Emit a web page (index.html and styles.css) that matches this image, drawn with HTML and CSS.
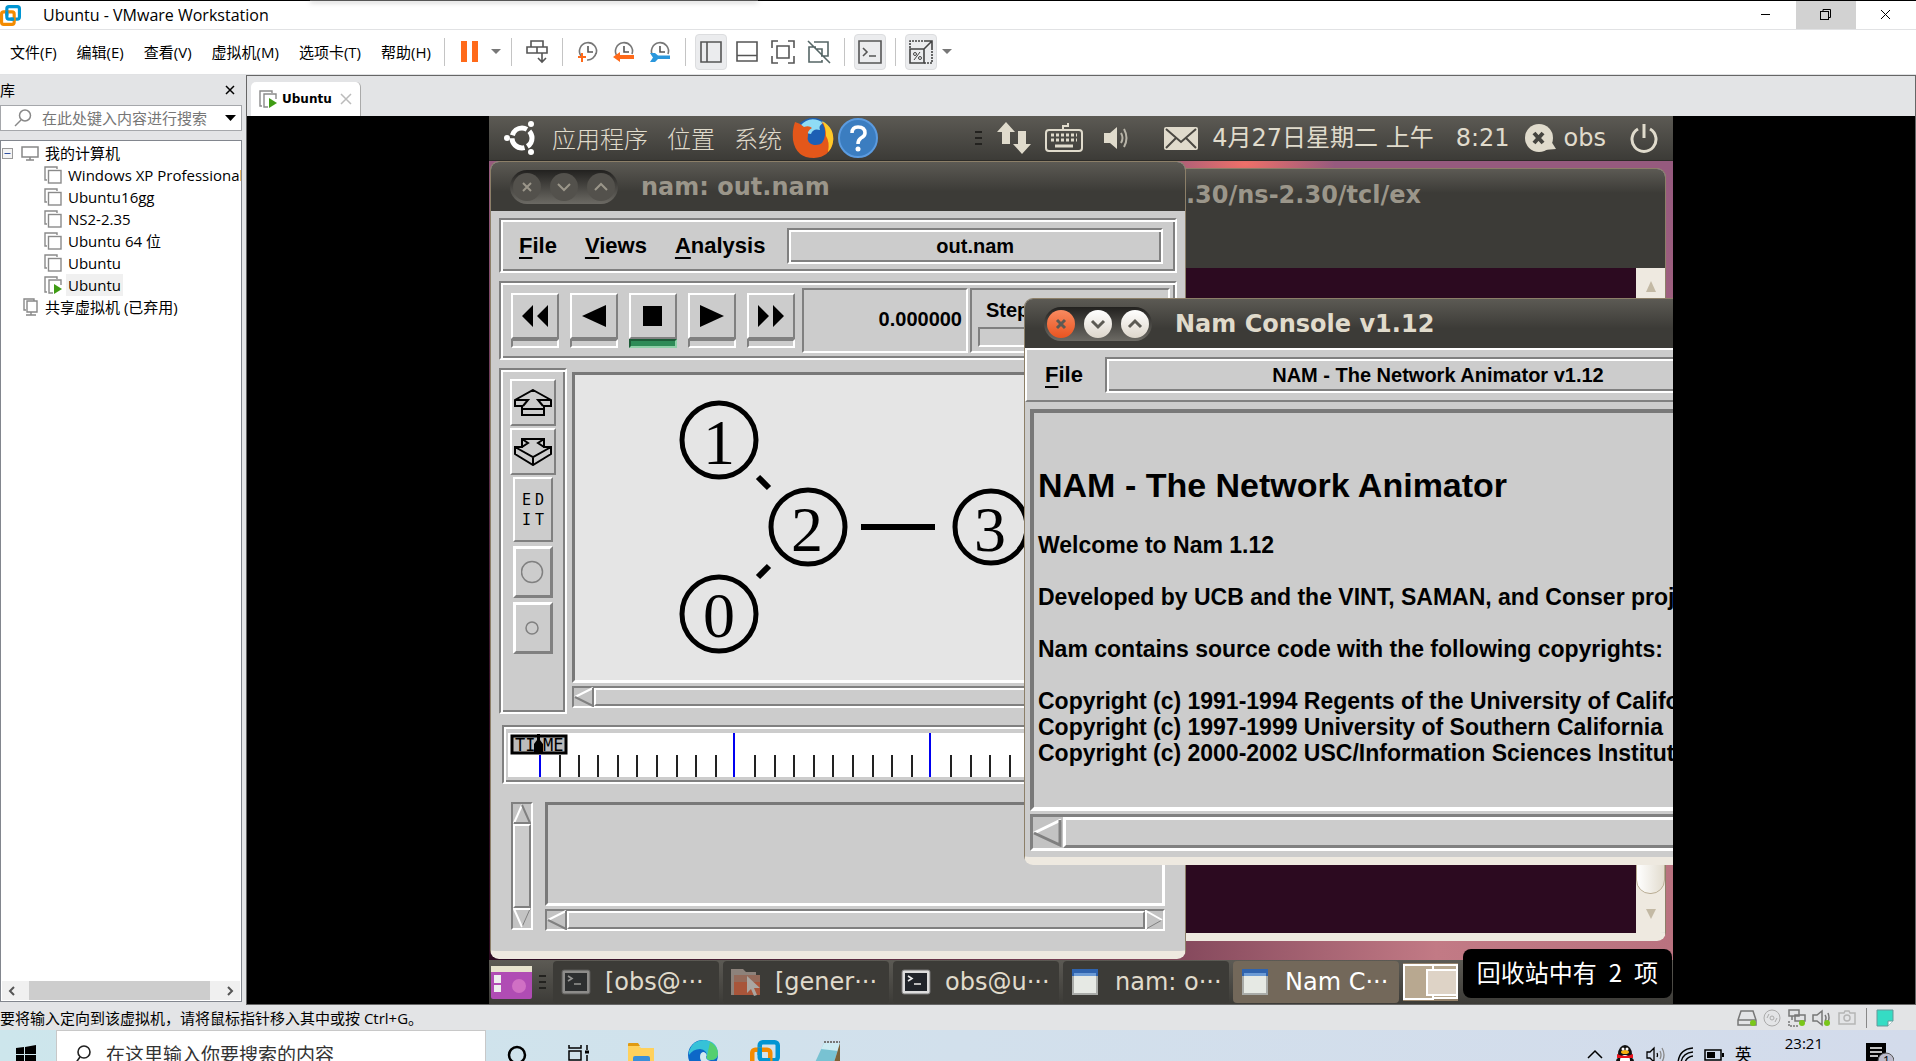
FILE: index.html
```html
<!DOCTYPE html>
<html lang="zh-CN">
  <head>
    <meta charset="UTF-8" />
    <meta name="viewport" content="width=device-width, initial-scale=1.0" />
    <title>Ubuntu - VMware Workstation</title>
    <link rel="stylesheet" href="styles.css">
  </head>
  <body>
    <!-- shared icons -->
    <svg class="defs" width="0" height="0">
      <symbol id="vmware" viewBox="0 0 20 20">
        <rect x="6.500" y="1.500" width="12" height="12" rx="2" fill="none" stroke="#0095d3" stroke-width="3" />
        <rect x="1.500" y="6.500" width="12" height="12" rx="2" fill="none" stroke="#f38b00" stroke-width="3" />
        <path d="M6.500 10V5M13.500 13.500H10" stroke="#0095d3" stroke-width="3" fill="none" />
      </symbol>
      <symbol id="vm" viewBox="0 0 18 18">
        <path d="M13 3V1H1V14H3" fill="none" stroke="#8a8a8a" stroke-width="1.400" />
        <rect x="4.500" y="4.500" width="12.500" height="12.500" fill="#fff" stroke="#8a8a8a" stroke-width="1.400" />
      </symbol>
      <symbol id="vm-on" viewBox="0 0 18 18">
        <path d="M13 3V1H1V16H3" fill="none" stroke="#8a8a8a" stroke-width="1.400" />
        <path d="M17 9V4H5V17H9" fill="none" stroke="#8a8a8a" stroke-width="1.400" />
        <path d="M10 8L18 13L10 18Z" fill="#3f9c14" />
      </symbol>
      <symbol id="clock" viewBox="0 0 22 22">
        <path d="M4 15A8.500 8.500 0 1 1 19 13" fill="none" stroke="#777" stroke-width="1.600" />
        <path d="M11 5V11H16" fill="none" stroke="#555" stroke-width="1.600" />
      </symbol>
      <symbol id="term" viewBox="0 0 30 26">
        <rect x="1" y="1" width="28" height="24" rx="2" fill="#ddd" stroke="#777" />
        <rect x="4" y="4" width="22" height="18" fill="#20242a" />
        <path d="M7 7L11 9.500L7 12M13 15H20" fill="none" stroke="#eee" stroke-width="1.600" />
      </symbol>
      <symbol id="win" viewBox="0 0 30 26">
        <rect x="2" y="1" width="24" height="24" fill="#e6e9e4" stroke="#a9aba8" stroke-width="2" />
        <rect x="1" y="0" width="26" height="7" fill="#2f63ae" />
        <rect x="3" y="4" width="22" height="3" fill="#6c9bd5" />
      </symbol>
    </svg>

    <main class="app">
      <header class="titlebar">
        <svg class="app-logo" width="21" height="21"><use href="#vmware" /></svg>
        <span class="app-title">Ubuntu - VMware Workstation</span>
        <div class="window-controls">
          <button aria-label="最小化"><svg width="12" height="12"><path d="M1 5.500H10" stroke="#000" /></svg></button>
          <button class="restore" aria-label="还原"><svg width="12" height="12" fill="none" stroke="#000"><path d="M3 2.500V.5H10.500V8.500H9" /><rect x=".5" y="2.500" width="8" height="8" /></svg></button>
          <button aria-label="关闭"><svg width="12" height="12"><path d="M1 1L10 10M10 1L1 10" stroke="#000" /></svg></button>
        </div>
      </header>

      <div class="menubar">
        <nav class="menus">
          <button>文件(F)</button>
          <button>编辑(E)</button>
          <button>查看(V)</button>
          <button>虚拟机(M)</button>
          <button>选项卡(T)</button>
          <button>帮助(H)</button>
        </nav>
        <div class="toolbar">
          <i class="sep"></i>
          <button aria-label="挂起"><svg width="18" height="22"><path d="M0 0H6V21H0ZM11 0H17V21H11Z" fill="#ff6a1a" /></svg></button>
          <button class="caret" aria-label="电源选项"><svg width="10" height="6"><path d="M0 0H10L5 5Z" fill="#777" /></svg></button>
          <i class="sep"></i>
          <button aria-label="发送"><svg width="22" height="24" fill="none" stroke="#555" stroke-width="1.600"><path d="M5 1H17V7H5ZM1 7H11V13H1ZM11 7H21V13H11ZM16 13V21M12 18L16 22L20 18" /></svg></button>
          <i class="sep"></i>
          <button aria-label="拍摄快照"><svg width="22" height="22"><use href="#clock" /><path d="M19 12A8.500 8.500 0 0 1 10 19" fill="none" stroke="#777" stroke-width="1.600" /><path d="M1 16H9M5 12V21" stroke="#ff6a1a" stroke-width="2" /></svg></button>
          <button aria-label="恢复快照"><svg width="22" height="22"><use href="#clock" /><path d="M0 16L7 11V14H21V18H7V21Z" fill="#ff6a1a" /></svg></button>
          <button aria-label="管理快照"><svg width="22" height="22"><use href="#clock" /><path d="M1 12H6L9 14.500H21V18H9L6 21H1L4 16.500Z" fill="#2a97dc" /></svg></button>
          <i class="sep"></i>
          <button class="on" aria-label="库"><svg width="22" height="22" fill="none" stroke="#555" stroke-width="1.600"><path d="M1 1H21V21H1ZM7 1V21" /></svg></button>
          <button aria-label="缩略图栏"><svg width="22" height="22" fill="none" stroke="#555" stroke-width="1.600"><path d="M1 1H21V20H1ZM1 14.500H21" /></svg></button>
          <button aria-label="全屏"><svg width="24" height="24" fill="none" stroke="#555" stroke-width="1.600"><path d="M1 8V1H7M17 1H23V8M23 16V23H17M7 23H1V16M6 6H18V18H6Z" /></svg></button>
          <button aria-label="Unity"><svg width="24" height="24" fill="none" stroke="#566" stroke-width="1.600"><path d="M7 2H21V16H14M15 20V22H2V7H9M9 9H15V15M1 1L23 23" /></svg></button>
          <i class="sep"></i>
          <button class="on" aria-label="控制台"><svg width="24" height="24" fill="none" stroke="#555" stroke-width="1.600"><path d="M1 1H23V23H1ZM5 8L9 12L5 16M11 16H18" /></svg></button>
          <i class="sep"></i>
          <button class="on" aria-label="拉伸"><svg width="24" height="24" fill="none" stroke="#444" stroke-width="1.600"><path d="M1 9H15V23H1ZM15 9L23 1M16 1H23V8" /><path d="M1 8V1H16M23 8V23H15" stroke-dasharray="2 1" /><path d="M5 20L11 12" stroke-width="1" /><circle cx="6" cy="14" r="1.500" stroke-width="1" /><circle cx="11" cy="18" r="1.500" stroke-width="1" /></svg></button>
          <button class="caret" aria-label="拉伸选项"><svg width="10" height="6"><path d="M0 0H10L5 5Z" fill="#777" /></svg></button>
        </div>
      </div>

      <div class="workspace">
        <aside class="library">
          <div class="library-head">
            <span>库</span>
            <button aria-label="关闭库"><svg width="10" height="10"><path d="M1 1L9 9M9 1L1 9" stroke="#000" stroke-width="1.500" /></svg></button>
          </div>
          <div class="library-search">
            <svg width="18" height="18" fill="none" stroke="#888" stroke-width="1.500"><circle cx="11" cy="6.500" r="5.500" /><path d="M7 11L1 17" /></svg>
            <input type="text" placeholder="在此处键入内容进行搜索" aria-label="搜索">
            <svg width="11" height="6"><path d="M0 0H11L5.500 6Z" /></svg>
          </div>
          <div class="tree">
            <ul>
              <li class="root">
                <svg width="11" height="11"><rect x=".5" y=".5" width="10" height="10" fill="#f4f4f4" stroke="#999" /><path d="M2.500 5.500H8.500" stroke="#3050a0" /></svg>
                <svg class="pc" width="18" height="15" fill="none" stroke="#888" stroke-width="1.500"><path d="M1 1H17V11H1ZM9 11V14M5 14H13" /></svg>我的计算机
              </li>
              <li><svg width="18" height="18"><use href="#vm" /></svg><span>Windows XP Professional</span></li>
              <li><svg width="18" height="18"><use href="#vm" /></svg><span>Ubuntu16gg</span></li>
              <li><svg width="18" height="18"><use href="#vm" /></svg><span>NS2-2.35</span></li>
              <li><svg width="18" height="18"><use href="#vm" /></svg><span>Ubuntu 64 位</span></li>
              <li><svg width="18" height="18"><use href="#vm" /></svg><span>Ubuntu</span></li>
              <li><svg width="18" height="18"><use href="#vm-on" /></svg><span class="current">Ubuntu</span></li>
              <li class="shared"><svg width="16" height="18" fill="none" stroke="#888" stroke-width="1.400"><path d="M11 3V1H1V12H3M4 3H14V14H4ZM8 14V17M3 17H13" /></svg>共享虚拟机 (已弃用)</li>
            </ul>
            <div class="hscroll">
              <svg width="8" height="10"><path d="M6 1L2 5L6 9" fill="none" stroke="#555" stroke-width="2" /></svg>
              <i></i>
              <svg width="8" height="10"><path d="M2 1L6 5L2 9" fill="none" stroke="#555" stroke-width="2" /></svg>
            </div>
          </div>
        </aside>

        <section class="viewer">
          <div class="tabs">
            <div class="tab">
              <svg width="18" height="18"><use href="#vm-on" /></svg>
              <span>Ubuntu</span>
              <button aria-label="关闭标签"><svg width="12" height="12"><path d="M1 1L11 11M11 1L1 11" stroke="#bbb" stroke-width="1.500" /></svg></button>
            </div>
          </div>

          <div class="display">
            <div class="guest">
              <div class="panel-top">
                <svg width="33" height="34"><circle cx="18" cy="17" r="10" fill="none" stroke="#fff" stroke-width="5" stroke-dasharray="18 3" stroke-dashoffset="8" /><g fill="#fff"><circle cx="3" cy="17" r="3" /><circle cx="27" cy="3" r="3" /><circle cx="27" cy="31" r="3" /></g></svg>
                <nav>
                  <a href="#">应用程序</a>
                  <a href="#">位置</a>
                  <a href="#">系统</a>
                </nav>
                <svg width="44" height="44">
                  <circle cx="21" cy="21" r="19" fill="#1c5fb4" />
                  <path d="M8 10Q18 -2 32 7Q26 9 28 14Q21 12 19 18Q11 17 8 10Z" fill="#8fdcf5" />
                  <path d="M3 6Q8 7 12 11Q17 9 20 12Q15 15 16 19Q14 27 22 29Q32 30 33 19Q34 11 29 6Q43 12 41 26Q38 41 22 42Q4 42 1 24Q0 14 3 6Z" fill="#e4571a" />
                  <path d="M30 5Q43 12 41 26Q40 32 36 36Q38 26 34 20Q34 11 30 5Z" fill="#ffc928" />
                </svg>
                <svg width="40" height="40"><circle cx="20" cy="20" r="19" fill="#3b7dc0" stroke="#5b9be0" stroke-width="2" /><path d="M14 15Q14 9 20 9Q27 9 27 15Q27 18 23 20Q20 22 20 26" fill="none" stroke="#fff" stroke-width="3.500" /><circle cx="20" cy="31" r="2.500" fill="#fff" /></svg>
                <div class="tray">
                  <svg width="8" height="14"><path d="M0 1H7M0 7H7M0 13H7" stroke="#23221f" stroke-width="2" /></svg>
                  <svg width="34" height="32" fill="#e0dbcc"><path d="M9 0L18 10H13V22H5V10H0ZM25 32L16 22H21V9H29V22H34Z" /></svg>
                  <svg width="38" height="30" fill="none" stroke="#e0dbcc" stroke-width="2"><rect x="1" y="7" width="36" height="21" rx="3" /><path d="M18 7V3H23V0" /><path d="M6 12H32M6 17H32" stroke-width="3" stroke-dasharray="3 2" /><path d="M10 23H28" stroke-width="3" /></svg>
                  <svg class="vol" width="24" height="24" fill="#e0dbcc"><path d="M0 7H6L13 1V23L6 17H0Z" /><path d="M17 7Q20 12 17 17M20 3Q25 12 20 21" fill="none" stroke="#b8b4a8" stroke-width="2" /></svg>
                  <svg width="34" height="23"><rect width="34" height="23" rx="2" fill="#e0dbcc" /><path d="M2 2L17 15L32 2M2 21L12 11M32 21L22 11" fill="none" stroke="#4a4842" stroke-width="2" /></svg>
                  <span class="date">4月27日星期二 上午</span>
                  <span class="clock">8:21</span>
                  <svg width="32" height="30"><circle cx="15" cy="15" r="14" fill="#e0dbcc" /><path d="M20 27L32 26L27 18Z" fill="#e0dbcc" /><path d="M10 10L19 20M19 10L10 20" stroke="#45443f" stroke-width="4" /></svg>
                  <span class="user">obs</span>
                  <svg class="power" width="28" height="30" fill="none" stroke="#e0dbcc" stroke-width="3"><path d="M8 6A12 12 0 1 0 20 6M14 1V15" /></svg>
                </div>
              </div>

              <section class="win terminal">
                <div class="terminal-head">.30/ns-2.30/tcl/ex</div>
                <div class="terminal-body">
                  <div class="terminal-screen"></div>
                  <div class="terminal-scroll">
                    <svg width="12" height="12"><path d="M6 0L11 11H1Z" fill="#c3b9a4" /></svg>
                    <i></i>
                    <svg width="12" height="12"><path d="M6 11L1 1H11Z" fill="#c3b9a4" /></svg>
                  </div>
                </div>
              </section>

              <section class="win nam">
                <div class="win-title">
                  <div class="orbs">
                    <button aria-label="关闭"><svg width="12" height="12"><path d="M2 2L10 10M10 2L2 10" /></svg></button>
                    <button aria-label="最小化"><svg width="16" height="12"><path d="M2 3L8 9L14 3" /></svg></button>
                    <button aria-label="最大化"><svg width="16" height="12"><path d="M2 9L8 3L14 9" /></svg></button>
                  </div>
                  <span>nam: out.nam</span>
                </div>
                <div class="nam-body">
                  <div class="groove nam-menu">
                    <button><u>F</u>ile</button>
                    <button><u>V</u>iews</button>
                    <button><u>A</u>nalysis</button>
                    <div class="groove name-box">out.nam</div>
                  </div>

                  <div class="groove nam-controls">
                    <div class="play"><button class="raised" aria-label="快退"><svg width="28" height="22"><path d="M12 0V22L1 11ZM27 0V22L16 11Z" /></svg></button><i></i></div>
                    <div class="play"><button class="raised" aria-label="倒放"><svg width="24" height="22"><path d="M24 0V22L0 11Z" /></svg></button><i></i></div>
                    <div class="play stop"><button class="raised" aria-label="停止"><svg width="20" height="20"><path d="M0 0H19V20H0Z" /></svg></button><i></i></div>
                    <div class="play"><button class="raised" aria-label="播放"><svg width="24" height="22"><path d="M0 0V22L24 11Z" /></svg></button><i></i></div>
                    <div class="play"><button class="raised" aria-label="快进"><svg width="28" height="22"><path d="M1 0V22L12 11ZM16 0V22L27 11Z" /></svg></button><i></i></div>
                    <output class="sunken time">0.000000</output>
                    <div class="sunken step"><label for="step">Step: 2.0ms</label><input id="step" class="sunken" type="text"></div>
                  </div>

                  <div class="nam-stage">
                    <div class="groove tools">
                      <button class="raised zoom" aria-label="放大"><svg width="40" height="28" fill="none" stroke="#000" stroke-width="2"><path d="M20 1L38 11V17H31V26H9V17H2V11ZM2 11H15L10 17M38 11H25L30 17M9 20H31" /></svg></button>
                      <button class="raised zoom" aria-label="缩小"><svg width="40" height="28" fill="none" stroke="#000" stroke-width="2"><path d="M9 1H31V9H38V16L20 27L2 16V9H9ZM2 9L20 19L38 9M20 19V27M9 1L15 5L9 9M31 1L25 5L31 9" /></svg></button>
                      <button class="raised edit"><span>E</span><span>D</span><span>I</span><span>T</span></button>
                      <button class="raised big" aria-label="大节点"><svg width="24" height="24"><circle cx="11" cy="12" r="10.500" fill="none" stroke="#808080" stroke-width="1.500" /></svg></button>
                      <button class="raised big" aria-label="小节点"><svg width="24" height="24"><circle cx="11" cy="12" r="6" fill="none" stroke="#808080" stroke-width="1.500" /></svg></button>
                    </div>
                    <div class="network">
                      <div class="canvas">
                        <svg width="480" height="300" viewBox="575 375 480 300" aria-label="网络拓扑">
                          <g fill="none" stroke="#000" stroke-width="5">
                            <circle cx="719" cy="440" r="37" />
                            <circle cx="719" cy="614" r="37" />
                            <circle cx="808" cy="527" r="37" />
                            <circle cx="991" cy="527" r="36" />
                            <path d="M758 477L769 488M758 577L769 566M861 527H935" stroke-width="6" />
                          </g>
                          <g class="node-label">
                            <text x="719" y="464">1</text>
                            <text x="719" y="637">0</text>
                            <text x="807" y="551">2</text>
                            <text x="990" y="551">3</text>
                          </g>
                        </svg>
                      </div>
                      <div class="tkbar">
                        <svg width="20" height="20"><path d="M19 1L1 10" stroke="#fff" stroke-width="2" /><path d="M1 10L19 19V1" fill="none" stroke="#808080" stroke-width="2" /></svg>
                        <i class="raised"></i>
                      </div>
                    </div>
                  </div>

                  <div class="groove timeline">
                    <svg viewBox="508 732 520 44" preserveAspectRatio="xMinYMid meet">
                      <path d="M560 754V776M579 754V776M598 754V776M618 754V776M637 754V776M657 754V776M677 754V776M696 754V776M716 754V776M755 754V776M775 754V776M794 754V776M814 754V776M833 754V776M853 754V776M873 754V776M892 754V776M912 754V776M951 754V776M971 754V776M990 754V776M1010 754V776" stroke="#222" stroke-width="2" />
                      <path d="M540 754V776M734 732V776M930 732V776" stroke="#0000f0" stroke-width="2" />
                      <rect x="512" y="735" width="54" height="17" fill="#bbb" stroke="#000" stroke-width="3" />
                      <text x="515" y="750">TI</text>
                      <text x="543" y="750">ME</text>
                      <path d="M537 733H540V739L543 743V753H534V743L537 739Z" />
                    </svg>
                  </div>

                  <div class="annotations">
                    <div class="tkbar vertical">
                      <svg width="18" height="20"><path d="M1 19L9 1" stroke="#fff" stroke-width="2" /><path d="M9 1L17 19H1" fill="none" stroke="#808080" stroke-width="2" /></svg>
                      <i class="raised"></i>
                      <svg width="18" height="20"><path d="M17 1L9 19" stroke="#808080" stroke-width="1" /><path d="M9 19L1 1H17" fill="none" stroke="#fff" stroke-width="2" /></svg>
                    </div>
                    <div class="notes">
                      <div class="note-area"></div>
                      <div class="tkbar">
                        <svg width="20" height="20"><path d="M19 1L1 10" stroke="#fff" stroke-width="2" /><path d="M1 10L19 19V1" fill="none" stroke="#808080" stroke-width="2" /></svg>
                        <i class="raised"></i>
                        <svg width="18" height="20"><path d="M1 19L17 10" stroke="#808080" /><path d="M17 10L1 1V19" fill="none" stroke="#fff" stroke-width="2" /></svg>
                      </div>
                    </div>
                  </div>
                </div>
              </section>

              <section class="win console">
                <div class="win-title active">
                  <div class="orbs">
                    <button class="close" aria-label="关闭"><svg width="12" height="12"><path d="M2 2L10 10M10 2L2 10" /></svg></button>
                    <button aria-label="最小化"><svg width="16" height="12"><path d="M2 3L8 9L14 3" /></svg></button>
                    <button aria-label="最大化"><svg width="16" height="12"><path d="M2 9L8 3L14 9" /></svg></button>
                  </div>
                  <span>Nam Console v1.12</span>
                </div>
                <div class="raised console-menu">
                  <button><u>F</u>ile</button>
                  <div class="groove name-box">NAM - The Network Animator v1.12</div>
                </div>
                <div class="console-text">
                  <h1>NAM - The Network Animator</h1>
                  <p>Welcome to Nam 1.12</p>
                  <p>Developed by UCB and the VINT, SAMAN, and Conser projects.</p>
                  <p>Nam contains source code with the following copyrights:</p>
                  <p>Copyright (c) 1991-1994 Regents of the University of California.<br>
                    Copyright (c) 1997-1999 University of Southern California<br>
                    Copyright (c) 2000-2002 USC/Information Sciences Institute</p>
                </div>
                <div class="tkbar thick">
                  <svg width="30" height="28"><path d="M28 1L1 14" stroke="#fff" stroke-width="3" /><path d="M1 14L27 26V1" fill="none" stroke="#808080" stroke-width="3" /></svg>
                  <i class="raised"></i>
                </div>
              </section>

              <div class="panel-bottom">
                <svg class="desk" width="41" height="33"><rect width="41" height="33" rx="2" fill="#b04cb4" /><rect width="41" height="6" fill="#e7e3cd" /><path d="M3 9H10V17H3ZM3 19H10V26H3Z" fill="#eee" /><circle cx="28" cy="20" r="7" fill="#d070c4" /></svg>
                <svg class="grip" width="8" height="14"><path d="M0 1H7M0 7H7M0 13H7" stroke="#23221f" stroke-width="2" /></svg>
                <button class="task"><svg class="dim" width="30" height="26"><use href="#term" /></svg>[obs@···</button>
                <button class="task"><svg width="30" height="28"><path d="M0 1H12L15 4H25V27H0Z" fill="#8d827b" /><path d="M3 7H29V27H3Z" fill="#a8553a" /><path d="M3 7H29V14H3Z" fill="#946a5a" /><path d="M16 8V25L20 21L23 28L26 27L23 20H29Z" fill="#aaa6a2" /></svg>[gener···</button>
                <button class="task"><svg width="30" height="26"><use href="#term" /></svg>obs@u···</button>
                <button class="task"><svg width="30" height="26"><use href="#win" /></svg>nam: o···</button>
                <button class="task current"><svg width="30" height="26"><use href="#win" /></svg>Nam C···</button>
                <svg class="pager" width="55" height="38"><rect width="55" height="38" fill="#94826b" /><path d="M1 2H30V36H1ZM30 2H54V35H30Z" fill="#b8a890" stroke="#fff" stroke-width="2" /><rect x="24" y="7" width="30" height="25" fill="#ded3c6" stroke="#fff" stroke-width="2" /></svg>
              </div>
              <div class="tooltip">回收站中有<span>2</span>项</div>
            </div>
          </div>
        </section>
      </div>

      <footer class="status">
        <span>要将输入定向到该虚拟机，请将鼠标指针移入其中或按 Ctrl+G。</span>
        <div class="devices">
          <svg width="20" height="18" fill="none" stroke="#777" stroke-width="1.500"><path d="M4 2H16L19 11V16H1V11ZM1 11H19" /><circle cx="16" cy="14" r="3" fill="#7ac61a" stroke="none" /></svg>
          <svg width="20" height="18" fill="none" stroke="#aaa"><circle cx="10" cy="9" r="8" /><circle cx="10" cy="9" r="2" /><path d="M5 9L7 5M13 13L15 9" /></svg>
          <svg width="20" height="18" fill="none" stroke="#777" stroke-width="1.500"><path d="M2 1H12V7H2ZM8 6H18V12H8ZM5 7V11" /><path d="M2 12V17H12" stroke-dasharray="2 1" /><circle cx="15" cy="14" r="3" fill="#7ac61a" stroke="none" /></svg>
          <svg width="20" height="18" fill="none" stroke="#777" stroke-width="1.500"><path d="M1 6H5L10 2V16L5 12H1ZM13 6Q15 9 13 12M16 4Q18 9 16 13" /><circle cx="15" cy="14" r="3" fill="#7ac61a" stroke="none" /></svg>
          <svg width="20" height="18" fill="none" stroke="#b5b5b5" stroke-width="1.500"><path d="M2 4H7L8 2H12L13 4H18V15H2Z" /><circle cx="10" cy="9" r="3" /></svg>
          <i></i>
          <svg width="18" height="18"><path d="M1 1H17V12L12 17H1Z" fill="#35dcc4" stroke="#699" /><path d="M12 17V12H17" fill="#fff" stroke="#699" /></svg>
        </div>
      </footer>
    </main>

    <div class="taskbar">
      <div class="taskbar-inner">
        <button class="start" aria-label="开始"><svg width="20" height="20"><path d="M0 3L8 2V9H0ZM9 2L20 0V9H9ZM0 10H8V18L0 17ZM9 10H20V20L9 18Z" /></svg></button>
        <div class="taskbar-search">
          <svg width="18" height="20" fill="none" stroke="#222" stroke-width="1.600"><circle cx="10" cy="7" r="6" /><path d="M6 12L1 19" /></svg>
          <input type="text" placeholder="在这里输入你要搜索的内容" aria-label="Windows 搜索">
        </div>
        <div class="pinned">
          <button aria-label="Cortana"><svg width="20" height="20"><circle cx="10" cy="10" r="8" fill="none" stroke="#000" stroke-width="2.500" /></svg></button>
          <button aria-label="任务视图"><svg width="22" height="20" fill="none" stroke="#000" stroke-width="1.500"><path d="M1 0V3H13V0M1 6H13V15H1ZM1 20V18H13V20M19 0V5M19 10V20" /><path d="M17 7H21" stroke-width="3" /></svg></button>
          <button aria-label="文件资源管理器"><svg width="26" height="24"><path d="M0 3H11L13 5H26V23H0Z" fill="#ffd15c" /><path d="M0 1Q0 0 1 0H10L12 3H0Z" fill="#e09a12" /><path d="M5 24V15Q5 13 7 13H20Q22 13 22 15V24Z" fill="#3a8fd8" /></svg></button>
          <button aria-label="Edge"><svg width="30" height="30"><circle cx="15" cy="15" r="15" fill="#0d68c8" /><path d="M1 11Q5 0 16 0Q29 1 30 13Q30 20 23 20Q17 20 19 16Q19 10 12 9Q5 9 1 15Z" fill="#36c2d8" /><path d="M22 2Q30 6 30 14Q29 20 23 20Q17 20 19 16Z" fill="#55cf70" /><path d="M12 17Q12 12 16 12Q20 14 18 17Q18 20 23 21Q18 25 14 22Q12 20 12 17Z" fill="#d2e8f0" /></svg></button>
          <button aria-label="VMware"><svg width="30" height="30"><use href="#vmware" /></svg></button>
          <button aria-label="记事本"><svg width="30" height="28"><path d="M12 2H28L20 28H0Z" fill="#78c2d2" /><path d="M12 2H28L26 10L9 8Z" fill="#cdebf2" /><path d="M28 2V20L24 28H20Z" fill="#7b6238" /><path d="M12 1H28" stroke="#777" stroke-width="2" stroke-dasharray="2 1" /></svg></button>
        </div>
        <div class="systray">
          <svg width="18" height="18"><path d="M2 12L9 5L16 12" fill="none" stroke="#000" stroke-width="1.500" /></svg>
          <svg width="20" height="22"><ellipse cx="10" cy="10" rx="7" ry="9" fill="#111" /><ellipse cx="10" cy="17" rx="9" ry="5" fill="#111" /><ellipse cx="10" cy="16" rx="5" ry="5" fill="#fff" /><ellipse cx="10" cy="8" rx="4" ry="2" fill="#f5b010" /><circle cx="8" cy="5" r="1.500" fill="#fff" /><circle cx="12" cy="5" r="1.500" fill="#fff" /><path d="M2 10Q10 14 18 10V14H2Z" fill="#e8121c" /></svg>
          <svg width="20" height="18" fill="none" stroke="#000" stroke-width="1.300"><path d="M1 6H4L8 2V16L4 12H1ZM11 7Q12 9 11 11" /><path d="M14 5Q16 9 14 13M16 2Q20 9 16 16" stroke="#888" /></svg>
          <svg width="16" height="18" fill="none" stroke="#000" stroke-width="1.400"><path d="M1 17Q2 3 16 2M4 17Q5 7 16 6M8 17Q9 11 16 10" /></svg>
          <svg width="20" height="14"><path d="M1 2H17V12H1Z" fill="none" stroke="#000" stroke-width="1.500" /><path d="M3 4H11V10H3ZM18 5H20V9H18Z" /></svg>
          <span class="ime">英</span>
          <time>23:21</time>
          <svg class="notice" width="28" height="28"><path d="M0 2H20V20H8L4 24V20H0Z" /><path d="M4 7H16M4 11H16M4 15H12" stroke="#fff" stroke-width="1.500" /><circle cx="20" cy="20" r="8" fill="#bbc" stroke="#555" /><text x="17" y="24">1</text></svg>
        </div>
      </div>
    </div>
  </body>
</html>
```
FILE: styles.css
```css
* {
  box-sizing: border-box;
}

body {
  margin: 0;
  height: 100vh;
  display: flex;
  flex-direction: column;
  overflow: hidden;
  font-family: "Open Sans", "Noto Sans CJK SC", sans-serif;
  font-size: 15px;
  line-height: 22px;
  color: #000;
  background: #e3e4e6;
}

button {
  padding: 0;
  border: none;
  background: none;
  font: inherit;
  color: inherit;
}

input {
  min-width: 0;
  padding: 0;
  border: none;
  background: none;
  font: inherit;
}

svg {
  display: block;
  flex: none;
}

.defs {
  position: absolute;
}

.app {
  flex: 1;
  min-height: 0;
  display: flex;
  flex-direction: column;
}

/* title bar and menus */
.titlebar {
  position: relative;
  height: 30px;
  display: flex;
  align-items: center;
  border-top: 1px solid #000;
  border-bottom: 1px solid #e1e2e4;
  background: #fff;
}

/* edge of the hidden full screen bar */
.titlebar::before {
  content: "";
  position: absolute;
  left: 310px;
  top: -1px;
  width: 448px;
  height: 1px;
  background: #555;
  box-shadow: 0 1px 5px #777;
}

.app-title {
  margin-left: 22px;
  font-size: 16px;
}

.window-controls {
  display: flex;
  align-self: stretch;
  margin-left: auto;
}

.window-controls button {
  width: 60px;
  display: flex;
  align-items: center;
  justify-content: center;
}

.window-controls .restore {
  background: #d2d2d2;
}

.menubar {
  height: 45px;
  display: flex;
  align-items: center;
  padding-bottom: 1px;
  background: #fff;
  border-bottom: 1px solid #e1e2e4;
}

.menus {
  display: flex;
  gap: 20px;
  padding-left: 10px;
  white-space: nowrap;
}

.toolbar {
  display: flex;
  align-items: center;
  margin-left: 6px;
}

.toolbar .sep {
  width: 1px;
  height: 28px;
  margin: 0 7px;
  background: #c4c4c4;
}

.toolbar button {
  width: 32px;
  height: 36px;
  margin: 0 2px;
  display: flex;
  align-items: center;
  justify-content: center;
  border-radius: 4px;
}

.toolbar .on {
  background: #ebecee;
  border: 1px solid #dcdddf;
}

.toolbar .caret {
  width: 12px;
}

.workspace {
  flex: 1;
  min-height: 0;
  display: flex;
}

/* library */
.library {
  width: 242px;
  margin-right: 4px;
  display: flex;
  flex-direction: column;
}

.library-head {
  height: 30px;
  display: flex;
  align-items: center;
  justify-content: space-between;
  padding-right: 7px;
}

.library-search {
  height: 26px;
  display: flex;
  align-items: center;
  padding: 0 5px 0 13px;
  border: 1px solid #a5a7ab;
  background: #fff;
}

.library-search input {
  flex: 1;
  margin-left: 10px;
}

input::placeholder {
  color: #767676;
  opacity: 1;
}

.tree {
  flex: 1;
  min-height: 0;
  margin: 9px 0 3px;
  padding: 1px;
  display: flex;
  flex-direction: column;
  border: 1px solid #82868e;
  background: #fff;
  overflow: hidden;
}

.tree ul {
  flex: 1;
  margin: 0;
  padding: 0;
  list-style: none;
}

.tree li {
  height: 22px;
  display: flex;
  align-items: center;
  padding-left: 42px;
  white-space: nowrap;
}

.tree li span {
  margin-left: 4px;
  padding: 0 2px;
}

.tree .root {
  padding-left: 0;
}

.tree .pc {
  margin: 0 6px 0 8px;
}

.tree .shared {
  gap: 6px;
  padding-left: 21px;
}

.tree .current {
  background: #f0f0f0;
}

.hscroll {
  height: 19px;
  display: flex;
  align-items: center;
  padding: 0 6px;
  background: #f0f0f0;
}

.hscroll i {
  flex: 1;
  height: 19px;
  margin: 0 16px 0 13px;
  background: #cdcdcd;
}

/* tab strip and display */
.viewer {
  flex: 1;
  min-width: 0;
  display: flex;
  flex-direction: column;
  border: 1px solid #666;
}

.tabs {
  height: 40px;
  padding: 6px 0 0 4px;
}

.tab {
  width: 110px;
  height: 34px;
  display: flex;
  align-items: center;
  padding: 0 8px;
  border-radius: 5px 5px 0 0;
  border-right: 1px solid #aaa;
  background: #fff;
  font-family: "DejaVu Sans", sans-serif;
  font-weight: bold;
  font-size: 12px;
}

.tab span {
  margin: 0 auto 0 5px;
}

.display {
  flex: 1;
  min-height: 0;
  display: flex;
  justify-content: center;
  background: #000;
}

.guest {
  position: relative;
  width: 1184px;
  display: flex;
  flex-direction: column;
  justify-content: space-between;
  overflow: hidden;
  background:
    radial-gradient(ellipse 90px 30px at 756px 48px, #f07068, transparent),
    linear-gradient(#965a7e 0, #965a7e 60px, transparent 600px),
    linear-gradient(90deg, #2c0a20 0%, #84485c 58%, #c27a85 80%, #b9727f 100%);
  color: #e0dbcc;
  font-family: "DejaVu Sans", "Noto Sans CJK SC", sans-serif;
  font-size: 24px;
}

.panel-top {
  height: 45px;
  display: flex;
  align-items: center;
  padding: 0 15px;
  background: linear-gradient(#5c5a54, #3c3b37);
  border-bottom: 1px solid #2c2b28;
  white-space: nowrap;
}

.panel-top nav {
  display: flex;
  gap: 19px;
  margin: 0 10px 0 15px;
  font-family: "Noto Sans CJK SC", sans-serif;
  font-weight: 300;
}

.panel-top nav + svg {
  margin-right: 2px;
}

.panel-top a {
  color: inherit;
  text-decoration: none;
}

.tray {
  margin-left: auto;
  display: flex;
  align-items: center;
  gap: 14px;
}

.tray .vol {
  margin: 0 22px 0 7px;
}

.tray .clock {
  margin-left: 8px;
}

.tray .user {
  margin-left: -6px;
}

.tray .power {
  margin-left: 10px;
}

/* guest windows are free on the desktop */
.win {
  position: absolute;
  display: flex;
  flex-direction: column;
  border: 1px solid #8c7f68;
  border-bottom: 8px solid #eee9e0;
  border-radius: 9px;
  overflow: hidden;
  background: #ccc;
  color: #000;
  font-family: "Liberation Sans", sans-serif;
  font-weight: bold;
  font-size: 20px;
}

.win-title {
  height: 49px;
  flex: none;
  display: flex;
  align-items: center;
  gap: 23px;
  padding-left: 19px;
  background: linear-gradient(#5c5a54, #3c3b37 60%);
  color: #9b968a;
  font-family: "DejaVu Sans", sans-serif;
  font-size: 24px;
}

.win-title.active {
  color: #e0dbcc;
}

.orbs {
  height: 34px;
  display: flex;
  align-items: center;
  gap: 9px;
  padding: 0 3px;
  border-radius: 17px;
  background: linear-gradient(#22211f, #6c6a64);
}

.orbs button {
  width: 28px;
  height: 28px;
  display: flex;
  align-items: center;
  justify-content: center;
  border-radius: 50%;
  background: #53514c;
}

.orbs path {
  fill: none;
  stroke: #9b968a;
  stroke-width: 2;
}

.active .orbs button {
  background: linear-gradient(#fff, #ddd6cb);
}

.active .orbs .close {
  background: linear-gradient(#f88a60, #e95420);
}

.active .orbs path {
  stroke: #5c5a54;
  stroke-width: 3;
}

.groove {
  border: 2px solid;
  border-color: #808080 #fff #fff #808080;
  box-shadow: inset 2px 2px #fff, inset -2px -2px #808080;
}

.raised {
  border: 2px solid;
  border-color: #fff #808080 #808080 #fff;
}

.sunken {
  border: 2px solid;
  border-color: #808080 #fff #fff #808080;
}

.name-box {
  flex: 1;
  height: 36px;
  display: flex;
  align-items: center;
  justify-content: center;
}

/* terminal behind */
.terminal {
  left: 676px;
  top: 52px;
  width: 501px;
  height: 773px;
}

.terminal-head {
  height: 99px;
  padding: 15px 20px;
  background: linear-gradient(#5c5a54, #3c3b37 24px);
  color: #9b968a;
  font-family: "DejaVu Sans", sans-serif;
  font-size: 24px;
}

.terminal-body {
  flex: 1;
  display: flex;
}

.terminal-screen {
  flex: 1;
  background: #2c0a20;
}

.terminal-scroll {
  width: 29px;
  display: flex;
  flex-direction: column;
  align-items: center;
  justify-content: space-between;
  padding: 13px 0;
  background: #eee9e0;
}

.terminal-scroll i {
  flex: 1;
  width: 29px;
  margin: 14px 0;
  border: 1px solid #b9ad94;
  border-radius: 14px;
  background: linear-gradient(90deg, #fff, #e2dccf);
}

/* nam */
.nam {
  left: 1px;
  top: 45px;
  width: 696px;
  height: 798px;
}

.nam-body {
  display: flex;
  flex-direction: column;
  gap: 8px;
  padding: 7px 8px 0;
}

.nam-menu {
  height: 55px;
  display: flex;
  align-items: center;
  gap: 28px;
  padding: 0 12px 0 18px;
}

.nam-menu button,
.console-menu button {
  font-size: 22px;
}

.nam-menu .name-box {
  margin-left: -6px;
}

u {
  text-underline-offset: 4px;
  text-decoration-thickness: 2px;
}

.nam-controls {
  height: 79px;
  display: flex;
  align-items: center;
  gap: 11px;
  padding: 0 5px 0 10px;
}

.play {
  width: 48px;
}

.play button {
  width: 48px;
  height: 46px;
  display: flex;
  align-items: center;
  justify-content: center;
}

.play i {
  display: block;
  height: 9px;
  border: 2px solid;
  border-color: #808080 #fff #fff #808080;
}

.play.stop i {
  border-color: #1d5c38 #8fd0a8 #8fd0a8 #1d5c38;
  background: #2e8b57;
}

.time {
  width: 166px;
  height: 65px;
  display: flex;
  align-items: center;
  justify-content: flex-end;
  margin-left: -4px;
  padding: 0 4px 3px 0;
}

.step {
  flex: 1;
  height: 65px;
  margin-left: -9px;
  padding: 9px 6px 0;
  white-space: nowrap;
}

.step label {
  display: block;
  padding-left: 8px;
}

.step input {
  width: 100%;
  height: 20px;
  margin-top: 6px;
  display: block;
}

.nam-stage {
  height: 346px;
  display: flex;
  gap: 5px;
}

.tools {
  width: 68px;
  display: flex;
  flex-direction: column;
  align-items: center;
  padding-top: 9px;
  gap: 2px;
}

.tools button {
  width: 40px;
  display: flex;
  align-items: center;
  justify-content: center;
}

.tools .zoom {
  width: 46px;
  height: 47px;
}

.tools .edit {
  height: 65px;
  display: grid;
  grid-template-columns: 13px 13px;
  grid-auto-rows: 20px;
  place-content: center;
  font-family: "DejaVu Sans Mono", monospace;
  font-weight: normal;
  font-size: 15px;
  line-height: 20px;
}

.tools .big {
  height: 52px;
  margin-top: 2px;
  border-width: 3px;
}

.network {
  flex: 1;
  min-width: 0;
  margin-top: 4px;
}

.canvas {
  height: 311px;
  overflow: hidden;
  border: 3px solid;
  border-color: #787878 #fff #fff #787878;
  background: #e5e5e5;
}

.node-label {
  font-family: "Liberation Serif", serif;
  font-weight: normal;
  font-size: 64px;
  text-anchor: middle;
}

.tkbar {
  height: 22px;
  display: flex;
  align-items: center;
  margin-top: 3px;
  border: 2px solid;
  border-color: #808080 #fff #fff #808080;
  background: #c3c3c3;
}

.tkbar i {
  flex: 1;
  align-self: stretch;
  background: #ccc;
}

.timeline {
  height: 59px;
  margin: 3px 0 0 3px;
  padding: 6px 4px;
}

.timeline svg {
  width: 100%;
  height: 44px;
  background: #fff;
}

.timeline text {
  font-family: "DejaVu Sans Mono", monospace;
  font-weight: normal;
  font-size: 17px;
}

.annotations {
  height: 130px;
  display: flex;
  gap: 12px;
  margin: 10px 12px 0;
}

.tkbar.vertical {
  width: 22px;
  height: 128px;
  flex-direction: column;
  margin: 0;
}

.tkbar.vertical i {
  width: 18px;
}

.notes {
  flex: 1;
}

.note-area {
  height: 104px;
  border: 3px solid;
  border-color: #787878 #fff #fff #787878;
}

/* console */
.console {
  left: 535px;
  top: 182px;
  width: 760px;
  height: 567px;
}

.console-menu {
  height: 54px;
  flex: none;
  display: flex;
  align-items: center;
  gap: 22px;
  padding: 0 10px 0 18px;
}

.console-text {
  flex: 1;
  margin: 7px 6px 0 5px;
  padding: 0 4px;
  border: 4px solid;
  border-color: #787878 #fff #fff #787878;
  font-size: 23px;
  line-height: 26px;
  white-space: nowrap;
}

.console-text h1 {
  margin: 51px 0 26px;
  font-size: 34px;
  line-height: 42px;
}

.console-text p {
  margin: 0 0 26px;
}

.tkbar.thick {
  height: 37px;
  flex: none;
  margin: 3px 6px 6px 5px;
  border-width: 3px;
}

.thick i {
  border-width: 3px;
}

/* guest task list */
.panel-bottom {
  height: 44px;
  display: flex;
  align-items: center;
  gap: 4px;
  padding-left: 2px;
  background: linear-gradient(#5c5a54, #3c3b37);
}

.panel-bottom .grip {
  margin: 0 2px 0 3px;
}

.task {
  width: 166px;
  height: 42px;
  display: flex;
  align-items: center;
  gap: 14px;
  padding-left: 8px;
  border-radius: 4px;
  background: #3c3b37;
  white-space: nowrap;
}

.task .dim {
  opacity: 0.5;
}

.task.current {
  background: #73685a;
  color: #fff;
}

.tooltip {
  position: absolute;
  right: 1px;
  bottom: 6px;
  height: 49px;
  padding: 12px 14px;
  border-radius: 8px;
  background: #000;
  color: #fff;
  font-family: "Noto Sans CJK SC", sans-serif;
  white-space: nowrap;
}

.tooltip span {
  margin: 0 12px;
}

/* status bar */
.status {
  height: 25px;
  display: flex;
  align-items: center;
  justify-content: space-between;
  padding-right: 22px;
}

.devices {
  display: flex;
  align-items: center;
  gap: 5px;
}

.devices i {
  width: 1px;
  height: 20px;
  margin: 0 4px;
  background: #888;
}

/* host taskbar, its lower part runs off the screen */
.taskbar {
  height: 31px;
  flex: none;
  overflow: hidden;
  background: linear-gradient(90deg, #cde6ec, #d2e0ec 50%, #d3dbeb);
}

.taskbar-inner {
  height: 50px;
  display: flex;
  align-items: center;
}

.start {
  width: 56px;
  padding-left: 16px;
}

.taskbar-search {
  width: 430px;
  height: 50px;
  display: flex;
  align-items: center;
  gap: 14px;
  padding-left: 17px;
  border: 1px solid #c8c8c8;
  background: #fff;
}

.taskbar-search input {
  flex: 1;
  font-size: 19px;
}

.taskbar-search input::placeholder {
  color: #333;
}

.pinned {
  display: flex;
}

.pinned button {
  width: 62px;
  display: flex;
  align-items: center;
  justify-content: center;
}

.systray {
  margin-left: auto;
  display: flex;
  align-items: center;
  gap: 11px;
  padding-right: 22px;
}

.ime {
  font-size: 17px;
}

.systray time {
  margin: 0 32px 24px 22px;
}

.notice text {
  font-size: 12px;
}
```
